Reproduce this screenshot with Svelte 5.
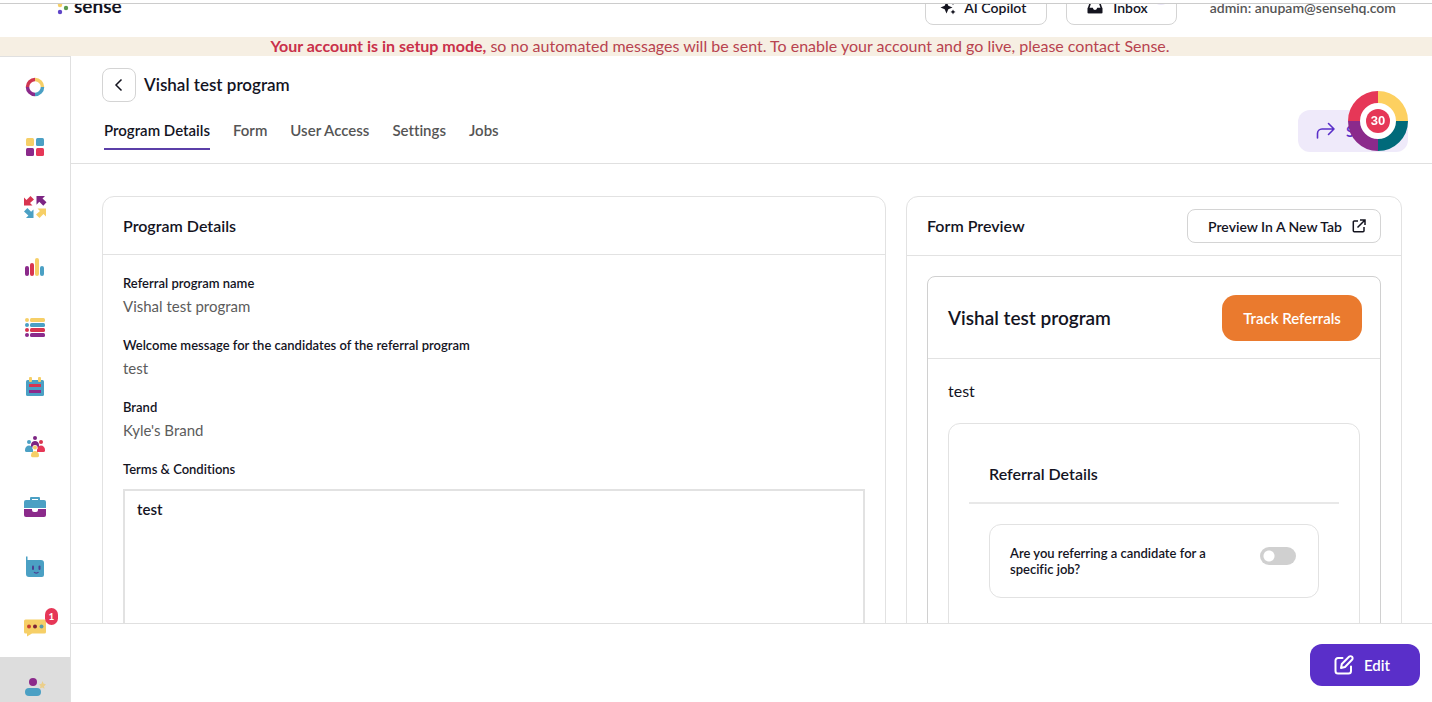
<script lang="ts">
  let activeTab = 'Program Details';
  let terms = 'test';
  let specificJob = false;

  const tabs = ['Program Details', 'Form', 'User Access', 'Settings', 'Jobs'];

  const fields = [
    { label: 'Referral program name', value: 'Vishal test program' },
    { label: 'Welcome message for the candidates of the referral program', value: 'test' },
    { label: 'Brand', value: "Kyle's Brand" }
  ];

  const navItems = [
    { id: 'home', label: 'Home' },
    { id: 'apps', label: 'Apps' },
    { id: 'journeys', label: 'Journeys' },
    { id: 'analytics', label: 'Analytics' },
    { id: 'lists', label: 'Lists' },
    { id: 'events', label: 'Events' },
    { id: 'people', label: 'People' },
    { id: 'jobs', label: 'Jobs' },
    { id: 'bot', label: 'Chatbot' },
    { id: 'messages', label: 'Messages', count: 1 },
    { id: 'referrals', label: 'Referrals' }
  ];
  const activeNav = 'referrals';
</script>

<div class="app">
  <header class="topbar">
    <a class="logo" href="#home">
      <svg width="12" height="20" viewBox="0 0 12 20">
        <circle cx="3" cy="9" r="2.2" fill="#f6cf67" />
        <circle cx="9" cy="12" r="2.2" fill="#5b9a4d" />
        <circle cx="3" cy="16" r="2.2" fill="#5f45c8" />
      </svg>
      <span>sense</span>
    </a>
    <div class="topbar-actions">
      <button class="pill" type="button">
        <svg width="16" height="16" viewBox="0 0 16 16" fill="#14141f">
          <path d="M6.500 2.500 8.300 6.700 12.500 8.500 8.300 10.300 6.500 14.500 4.700 10.300 0.500 8.500 4.700 6.700z" />
          <path d="M13 1l.8 1.800 1.700.8-1.700.8-.8 1.800-.8-1.800-1.700-.8 1.700-.8z" />
          <path d="M13 10.500l.8 1.600 1.700.9-1.700.8-.8 1.700-.8-1.700-1.700-.8 1.700-.9z" />
        </svg>
        AI Copilot
      </button>
      <button class="pill inbox" type="button">
        <svg width="16" height="16" viewBox="0 0 16 16" fill="none" stroke="#14141f" stroke-width="1.600">
          <path d="M1.500 9.500 3.800 2.500h8.400l2.300 7v4h-13z" stroke-linejoin="round" />
          <path d="M1.500 9.500h3.700c.4 1.600 1.400 2.200 2.800 2.200s2.400-.6 2.800-2.200h3.700v4h-13z" fill="#14141f" />
        </svg>
        Inbox
        <span class="inbox-dot"></span>
      </button>
      <span class="account">admin: anupam@sensehq.com</span>
    </div>
  </header>

  <div class="banner">
    <strong>Your account is in setup mode,</strong> so no automated messages will be sent. To enable your account and go live, please contact Sense.
  </div>

  <div class="body">
    <nav class="sidebar">
      {#each navItems as item}
        <a href="#{item.id}" class="nav-item" class:active={item.id === activeNav} aria-label={item.label}>
          <svg width="24" height="24" viewBox="0 0 24 24">
            {#if item.id === 'home'}
              <g fill="none" stroke-width="3.500">
                <path d="M12 4.500A7.500 7.500 0 0 1 19.500 12" stroke="#f6cf67" />
                <path d="M19.500 12A7.500 7.500 0 0 1 12 19.500" stroke="#4ba0c4" />
                <path d="M12 19.500A7.500 7.500 0 0 1 4.500 12" stroke="#8b2a8b" />
                <path d="M4.500 12A7.500 7.500 0 0 1 12 4.500" stroke="#cf3650" />
              </g>
            {:else if item.id === 'apps'}
              <rect x="3" y="3" width="8" height="8" rx="1.500" fill="#f6cf67" />
              <rect x="13" y="3" width="8" height="8" rx="1.500" fill="#4ba0c4" />
              <rect x="3" y="13" width="8" height="8" rx="1.500" fill="#8b2a8b" />
              <rect x="13" y="13" width="8" height="8" rx="1.500" fill="#e63757" />
            {:else if item.id === 'journeys'}
              <path d="M1 10.500V2.500l2.500 2.500L7.500 1 11 4.500 7 8l2.500 2.500z" fill="#d8354f" />
              <path d="M13.500 1h8.500l-2.500 2.500 4 3.800-3.200 3.400-4-3.900-2.800 3z" fill="#7d2583" />
              <path d="M10.500 23H3l2.400-2.600-4.400-4L4.400 13l3.700 3.800 2.400-2.400z" fill="#4ba0c4" />
              <path d="M23 13.500v8l-2.500-2.400L16.500 23 13 19.500l4-3.600-2.500-2.400z" fill="#f6cf67" />
            {:else if item.id === 'analytics'}
              <rect x="2" y="11" width="4" height="10" rx="2" fill="#8b2a8b" />
              <rect x="7" y="8" width="4" height="13" rx="2" fill="#d8354f" />
              <rect x="12" y="3" width="4" height="18" rx="2" fill="#f6cf67" />
              <rect x="17" y="11" width="4" height="10" rx="2" fill="#4ba0c4" />
            {:else if item.id === 'lists'}
              <g fill="#f6cf67"><circle cx="4" cy="5" r="2" /><rect x="7" y="3" width="15" height="4" rx="1.500" /></g>
              <g fill="#4ba0c4"><circle cx="4" cy="10" r="2" /><rect x="7" y="8" width="15" height="4" rx="1.500" /></g>
              <g fill="#d8354f"><circle cx="4" cy="15" r="2" /><rect x="7" y="13" width="15" height="4" rx="1.500" /></g>
              <g fill="#8b2a8b"><circle cx="4" cy="20" r="2" /><rect x="7" y="18" width="15" height="4" rx="1.500" /></g>
            {:else if item.id === 'events'}
              <rect x="3" y="5" width="18" height="16" rx="1.500" fill="#4ba0c4" />
              <rect x="6" y="2" width="3" height="5" rx="1" fill="#f6cf67" />
              <rect x="15" y="2" width="3" height="5" rx="1" fill="#f6cf67" />
              <rect x="6" y="9" width="12" height="3" fill="#d8354f" />
              <rect x="6" y="15" width="12" height="3" fill="#8b2a8b" />
            {:else if item.id === 'people'}
              <circle cx="12" cy="3" r="2" fill="#7d2583" />
              <path d="M8 10c0-5.500 8-5.500 8 0v3H8z" fill="#7d2583" />
              <circle cx="6" cy="7" r="2" fill="#4ba0c4" />
              <path d="M2 15c0-6 8-6 8 0v2H3.500A1.500 1.500 0 0 1 2 15.500z" fill="#4ba0c4" />
              <circle cx="18" cy="7" r="2" fill="#d8354f" />
              <path d="M14 15c0-6 8-6 8 0v.5a1.500 1.500 0 0 1-1.500 1.500H14z" fill="#e63757" />
              <circle cx="12" cy="12.500" r="2.600" fill="#fff" />
              <circle cx="12" cy="12.500" r="2" fill="#f6cf67" />
              <path d="M8 20.500c0-6 8-6 8 0 0 1-.5 1.700-1.500 1.700h-5c-1 0-1.500-.7-1.500-1.700z" fill="#f6cf67" />
            {:else if item.id === 'jobs'}
              <path d="M8 6V3h8v3" fill="none" stroke="#4ba0c4" stroke-width="2" stroke-linejoin="round" />
              <path d="M1 13V7a2 2 0 0 1 2-2h18a2 2 0 0 1 2 2v6z" fill="#4ba0c4" />
              <path d="M1 14h22v6a2 2 0 0 1-2 2H3a2 2 0 0 1-2-2z" fill="#8b2a8b" />
              <path d="M9 13h6v2a2 2 0 0 1-2 2h-2a2 2 0 0 1-2-2z" fill="#fff" />
            {:else if item.id === 'bot'}
              <path d="M3 1.500h1.500V5H18a3 3 0 0 1 3 3v12a2 2 0 0 1-2 2H6a3 3 0 0 1-3-3z" fill="#4ba0c4" />
              <rect x="9" y="10.500" width="2" height="4.500" rx="1" fill="#4b3f92" />
              <rect x="15.500" y="10.500" width="2" height="4.500" rx="1" fill="#4b3f92" />
              <path d="M11 17c1 1.400 3.500 1.400 4.500 0" fill="none" stroke="#4b3f92" stroke-width="1.200" />
            {:else if item.id === 'messages'}
              <path d="M2.500 4.500h19A1.500 1.500 0 0 1 23 6v11a1.500 1.500 0 0 1-1.500 1.500H9L4 21.500v-3H2.500A1.500 1.500 0 0 1 1 17V6a1.500 1.500 0 0 1 1.500-1.500z" fill="#f6cf67" />
              <circle cx="6" cy="11.500" r="2" fill="#c8402f" />
              <circle cx="12" cy="11.500" r="2" fill="#7a2337" />
              <circle cx="18.500" cy="11.500" r="2" fill="#5b9aa8" />
            {:else}
              <circle cx="10" cy="7" r="4" fill="#8b2a8b" />
              <rect x="2" y="13" width="16" height="8" rx="4" fill="#4ba0c4" />
              <path d="M19.500 6l1 2.500 2.500 1-2 1.700.5 2.500-2.300-1.200-2.300 1 .6-2.500L16 9.500l2.500-.8z" fill="#ebcf8b" />
            {/if}
          </svg>
          {#if item.count}
            <span class="count">{item.count}</span>
          {/if}
        </a>
      {/each}
    </nav>

    <main class="main">
      <div class="page-head">
        <div>
          <div class="title-row">
            <button class="back" type="button" aria-label="Back">
              <svg width="16" height="16" viewBox="0 0 16 16" fill="none" stroke="#14141f" stroke-width="1.500">
                <path d="M10.500 2.500 5 8l5.500 5.500" />
              </svg>
            </button>
            <h1>Vishal test program</h1>
          </div>
          <div class="tabs" role="tablist">
            {#each tabs as tab}
              <button
                type="button"
                role="tab"
                class="tab"
                class:selected={tab === activeTab}
                aria-selected={tab === activeTab}
                on:click={() => (activeTab = tab)}
              >
                {tab}
              </button>
            {/each}
          </div>
        </div>
        <button class="share" type="button">
          <svg width="20" height="20" viewBox="0 0 20 20" fill="none" stroke="#5a2fc9" stroke-width="1.600" stroke-linecap="round" stroke-linejoin="round">
            <path d="M1.500 17v-4.500A4.500 4.500 0 0 1 6 8h12M12.500 2.500 18 8l-5.500 5.500" />
          </svg>
          Share
        </button>
      </div>

      <div class="content">
        <section class="card">
          <div class="card-head">
            <h2>Program Details</h2>
          </div>
          <div class="details">
            {#each fields as field}
              <div class="field">
                <div class="label">{field.label}</div>
                <div class="value">{field.value}</div>
              </div>
            {/each}
            <div class="terms">
              <label class="label" for="terms">Terms &amp; Conditions</label>
              <textarea id="terms" rows="12" readonly bind:value={terms}></textarea>
            </div>
          </div>
        </section>

        <section class="card">
          <div class="card-head">
            <h2>Form Preview</h2>
            <button class="new-tab" type="button">
              Preview In A New Tab
              <svg width="14" height="14" viewBox="0 0 14 14" fill="none" stroke="#14141f" stroke-width="1.500">
                <path d="M6 2H2.300a1 1 0 0 0-1 1v8.700a1 1 0 0 0 1 1H11a1 1 0 0 0 1-1V8M8 1h5v5M13 1 5.500 8.500" />
              </svg>
            </button>
          </div>
          <div class="preview">
            <div class="form">
              <div class="form-head">
                <h3>Vishal test program</h3>
                <button class="track" type="button">Track Referrals</button>
              </div>
              <div class="form-body">
                <p>test</p>
                <div class="referral">
                  <h4>Referral Details</h4>
                  <div class="question">
                    <label for="specific-job">Are you referring a candidate for a specific job?</label>
                    <input id="specific-job" class="toggle" type="checkbox" role="switch" bind:checked={specificJob} />
                  </div>
                </div>
              </div>
            </div>
          </div>
        </section>
      </div>

      <footer class="page-foot">
        <button class="edit" type="button">
          <svg width="20" height="20" viewBox="0 0 20 20" fill="none" stroke="#fff" stroke-width="2" stroke-linecap="round" stroke-linejoin="round">
            <path d="M8.500 3H4a2.500 2.500 0 0 0-2.500 2.500v10.500A2.500 2.500 0 0 0 4 18.500h10.500A2.500 2.500 0 0 0 17 16v-4.500" />
            <path d="M7 13l.8-4L15 1.800a2 2 0 0 1 3 3L11 12z" />
          </svg>
          Edit
        </button>
      </footer>
    </main>
  </div>

  <button class="guide" type="button" aria-label="Guides">
    <svg width="60" height="60" viewBox="0 0 60 60">
      <circle cx="30" cy="30" r="29" fill="#fff" />
      <g fill="none" stroke-width="12">
        <path d="M30 6A24 24 0 0 1 54 30" stroke="#fdd060" />
        <path d="M54 30A24 24 0 0 1 30 54" stroke="#006a7a" />
        <path d="M30 54A24 24 0 0 1 6 30" stroke="#8b2a8b" />
        <path d="M6 30A24 24 0 0 1 30 6" stroke="#e63757" />
      </g>
      <circle cx="30" cy="30" r="12" fill="#e63757" />
    </svg>
    <span>30</span>
  </button>
</div>

<style>
  :global(body) {
    margin: 0;
    background: #fff;
  }

  .app {
    display: flex;
    flex-direction: column;
    height: 100vh;
    overflow: hidden;
    box-sizing: border-box;
    padding-top: 3px;
    font-family: Lato, 'Open Sans', sans-serif;
    font-size: 15px;
    font-variant-ligatures: none;
    color: #14141f;
  }

  .app :global(*) {
    box-sizing: border-box;
  }

  button {
    font: inherit;
    font-variant-ligatures: none;
    color: inherit;
    background: none;
    border: 0;
    padding: 0;
    cursor: pointer;
  }

  h1,
  h2,
  h3,
  h4,
  p {
    margin: 0;
  }

  svg {
    display: block;
    flex: none;
  }

  .topbar {
    flex: none;
    height: 34px;
    display: flex;
    justify-content: space-between;
    align-items: flex-end;
    border-top: 1px solid #ccc;
    padding: 0 36px 12px 57px;
    overflow: hidden;
  }

  .logo {
    display: flex;
    align-items: center;
    gap: 5px;
    height: 38px;
    color: #14141f;
    font-size: 19px;
    font-weight: 700;
    line-height: 24px;
    text-decoration: none;
  }

  .topbar-actions {
    display: flex;
    align-items: center;
    gap: 19px;
    font-size: 14px;
    font-weight: 600;
  }

  .pill {
    position: relative;
    display: flex;
    align-items: center;
    gap: 8px;
    height: 34px;
    padding: 0 20px 2px 14px;
    border: 1px solid #d4d4d4;
    border-radius: 8px;
  }

  .inbox {
    gap: 10px;
    padding: 0 28px 2px 20px;
  }

  .inbox-dot {
    position: absolute;
    right: 6px;
    top: -5px;
    width: 18px;
    height: 18px;
    border-radius: 50%;
    background: #ece8f9;
  }

  .account {
    padding: 0 0 2px 14px;
    color: #555;
  }

  .banner {
    flex: none;
    padding: 0 0 1px 8px;
    background: #f6efe3;
    color: #b8434f;
    font-size: 16px;
    line-height: 18px;
    text-align: center;
    white-space: nowrap;
  }

  .banner strong {
    color: #c9304a;
  }

  .body {
    flex: 1;
    display: flex;
    min-height: 0;
  }

  .sidebar {
    flex: none;
    width: 71px;
    border-top: 1px solid #e0e0e0;
    border-right: 1px solid #e0e0e0;
    overflow: hidden;
  }

  .nav-item {
    position: relative;
    display: flex;
    align-items: center;
    justify-content: center;
    height: 60px;
  }

  .nav-item.active {
    background: #ddd;
  }

  .count {
    position: absolute;
    top: 11px;
    right: 12px;
    width: 13px;
    height: 17px;
    border-radius: 8px;
    background: #e63757;
    color: #fff;
    font-size: 10px;
    font-weight: 700;
    line-height: 17px;
    text-align: center;
  }

  .main {
    flex: 1;
    display: flex;
    flex-direction: column;
    min-width: 0;
  }

  .page-head {
    flex: none;
    display: flex;
    justify-content: space-between;
    align-items: flex-end;
    padding: 12px 24px 11px 31px;
    border-bottom: 1px solid #e0e0e0;
  }

  .title-row {
    display: flex;
    align-items: center;
    gap: 8px;
  }

  .back {
    display: flex;
    align-items: center;
    justify-content: center;
    width: 34px;
    height: 34px;
    border: 1px solid #d4d4d4;
    border-radius: 8px;
  }

  h1 {
    font-size: 17px;
    font-weight: 600;
    line-height: 24px;
  }

  h2,
  h4 {
    font-size: 16px;
    font-weight: 600;
    line-height: 24px;
  }

  .tabs {
    display: flex;
    gap: 23px;
    padding: 18px 2px 2px;
  }

  .tab {
    padding-bottom: 8px;
    border-bottom: 2px solid transparent;
    color: #555;
    font-weight: 600;
    line-height: 20px;
  }

  .tab.selected {
    border-color: #5b3fa8;
    color: #14141f;
  }

  .share {
    display: flex;
    align-items: center;
    gap: 10px;
    width: 110px;
    height: 42px;
    padding-left: 18px;
    border-radius: 12px;
    background: #efeafa;
    color: #5a2fc9;
    font-weight: 600;
  }

  .content {
    flex: 1;
    min-height: 0;
    display: grid;
    grid-template-columns: 49fr 31fr;
    align-items: start;
    gap: 20px;
    padding: 32px 30px 0 31px;
    overflow: hidden;
  }

  .card {
    min-width: 0;
    border: 1px solid #e2e2e2;
    border-radius: 12px;
  }

  .card-head {
    display: flex;
    justify-content: space-between;
    align-items: center;
    min-height: 58px;
    padding: 12px 20px;
    border-bottom: 1px solid #e2e2e2;
  }

  .new-tab {
    display: flex;
    align-items: center;
    gap: 10px;
    height: 34px;
    padding: 0 14px 0 20px;
    border: 1px solid #d4d4d4;
    border-radius: 8px;
    font-size: 14px;
    font-weight: 600;
  }

  .details {
    display: flex;
    flex-direction: column;
    gap: 21px;
    padding: 20px;
  }

  .label {
    font-size: 13px;
    font-weight: 600;
    line-height: 16px;
  }

  .value {
    margin-top: 5px;
    color: #5c5c5c;
    line-height: 20px;
  }

  .terms {
    display: flex;
    flex-direction: column;
    gap: 12px;
  }

  textarea {
    width: 100%;
    padding: 8px 12px;
    border: 2px solid #e2e2e2;
    border-radius: 0;
    color: inherit;
    font: inherit;
    font-weight: 600;
    line-height: 20px;
    resize: none;
  }

  .preview {
    padding: 20px;
  }

  .form {
    border: 1px solid #d0d0d0;
    border-radius: 8px;
  }

  .form-head {
    display: flex;
    justify-content: space-between;
    align-items: center;
    padding: 18px 18px 17px 20px;
    border-bottom: 1px solid #e2e2e2;
  }

  h3 {
    font-size: 19px;
    font-weight: 600;
    line-height: 24px;
  }

  .track {
    width: 140px;
    height: 46px;
    border-radius: 14px;
    background: #ea7a2e;
    color: #fff;
    font-weight: 600;
  }

  .form-body {
    padding: 20px;
  }

  .form-body p {
    margin-bottom: 20px;
    font-size: 16px;
    line-height: 24px;
  }

  .referral {
    min-height: 320px;
    padding: 20px;
    border: 1px solid #e2e2e2;
    border-radius: 12px;
  }

  .referral h4 {
    padding: 18px 20px 16px;
    border-bottom: 2px solid #e8e8e8;
  }

  .question {
    display: flex;
    justify-content: space-between;
    align-items: flex-start;
    gap: 40px;
    margin: 20px 20px 0;
    padding: 20px;
    border: 1px solid #e2e2e2;
    border-radius: 12px;
    font-size: 13px;
    font-weight: 600;
    line-height: 16px;
  }

  .toggle {
    flex: none;
    appearance: none;
    width: 36px;
    height: 18px;
    margin: 2px;
    border-radius: 9px;
    background: radial-gradient(circle at 9px 9px, #fff 5px, #d0d0d0 6px);
    cursor: pointer;
  }

  .toggle:checked {
    background: radial-gradient(circle at 27px 9px, #fff 5px, #5a2fc9 6px);
  }

  .page-foot {
    flex: none;
    display: flex;
    justify-content: flex-end;
    padding: 20px 12px 16px;
    border-top: 1px solid #e0e0e0;
  }

  .edit {
    display: flex;
    align-items: center;
    gap: 10px;
    width: 110px;
    height: 42px;
    padding-left: 24px;
    border-radius: 12px;
    background: #5a2fc9;
    color: #fff;
    font-weight: 600;
  }

  .guide {
    position: fixed;
    top: 91px;
    right: 24px;
    width: 60px;
    height: 60px;
  }

  .guide span {
    position: absolute;
    inset: 0;
    color: #fff;
    font-family: 'Liberation Sans', sans-serif;
    font-size: 13px;
    font-weight: 700;
    line-height: 60px;
    text-align: center;
  }
</style>
